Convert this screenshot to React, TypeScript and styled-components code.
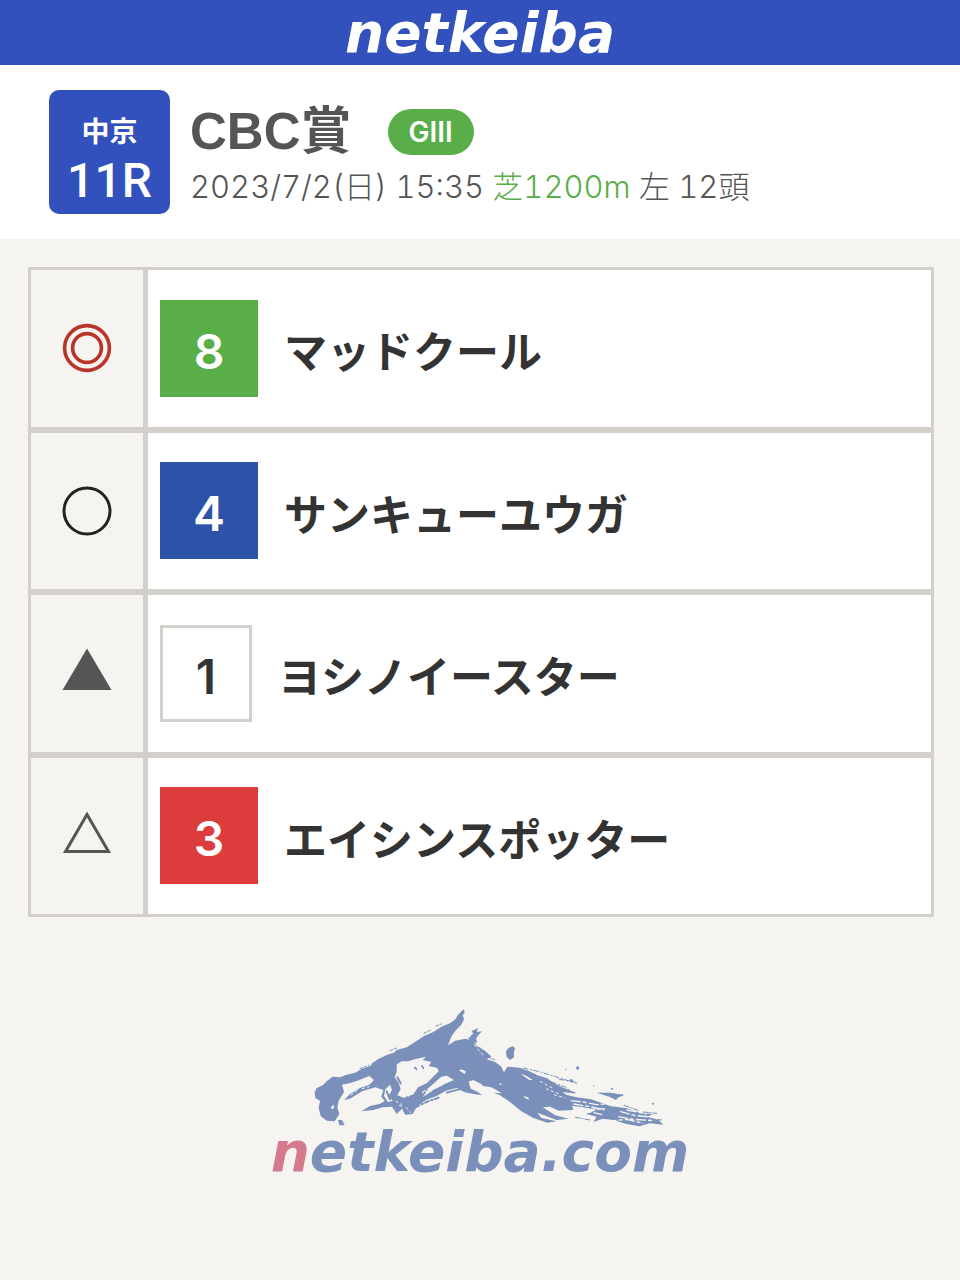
import React from "react";
import styled, { createGlobalStyle } from "styled-components";

const brand = "#3251bd";
const paper = "#f5f4f0";
const line = "#d3d0cb";
const turf = "#59ae4a";
const ink = "#555555";
const brush = "#7a90ba";

const GlobalStyle = createGlobalStyle`
  *, *::before, *::after { box-sizing: border-box; }
  body {
    margin: 0;
    background: ${paper};
    color: ${ink};
    font-family: Inter, "Noto Sans CJK JP", sans-serif;
  }
  h1, p { margin: 0; }
`;

const TopBar = styled.header`
  display: flex;
  align-items: center;
  justify-content: center;
  height: 65px;
  background: ${brand};
`;

const Wordmark = styled.a<{ $color: string }>`
  font: italic 700 55px/64px "DejaVu Sans", sans-serif;
  color: ${(p) => p.$color};
  text-decoration: none;
`;

const Initial = styled.span`
  color: #d47a8c;
`;

const RaceHeader = styled.section`
  display: flex;
  gap: 20px;
  padding: 25px 49px;
  background: #fff;
`;

const RaceNumber = styled.div`
  display: flex;
  flex-direction: column;
  align-items: center;
  flex: none;
  width: 121px;
  height: 124px;
  padding-top: 24px;
  border-radius: 10px;
  background: ${brand};
  color: #fff;
`;

const Venue = styled.span`
  font-size: 28px;
  font-weight: 700;
  line-height: 36px;
`;

const Round = styled.span`
  font: 500 48px/62px Roboto, sans-serif;
`;

const RaceInfo = styled.div`
  padding-top: 12px;
`;

const TitleLine = styled.div`
  display: flex;
  align-items: center;
  gap: 36px;
  height: 60px;
`;

const Title = styled.h1`
  font: 700 51px/60px "Liberation Sans", "Noto Sans CJK JP", sans-serif;
`;

const Grade = styled.span`
  padding: 0 21px;
  border-radius: 23px;
  background: ${turf};
  color: #fff;
  font-size: 28px;
  font-weight: 600;
  line-height: 46px;
`;

const Details = styled.p`
  font-size: 31px;
  font-weight: 300;
  font-variant-numeric: tabular-nums;
  line-height: 50px;
`;

const Course = styled.span`
  color: ${turf};
`;

const Main = styled.main`
  padding: 28px 26px 0 28px;
`;

const Picks = styled.table`
  width: 100%;
  height: 650px;
  border-collapse: separate;
  border-spacing: 0;
`;

const MarkCell = styled.td`
  width: 118px;
  padding: 0;
  border: 3px solid ${line};
  text-align: center;
`;

const HorseCell = styled.td`
  padding: 0 12px;
  border: 3px solid ${line};
  border-left-width: 2px;
  background: #fff;
`;

const Horse = styled.div`
  display: flex;
  align-items: center;
  gap: 26px;
`;

const Post = styled.span<{ $bg: string; $plain?: boolean }>`
  flex: none;
  width: ${(p) => (p.$plain ? 92 : 98)}px;
  height: 97px;
  border: 3px solid ${(p) => (p.$plain ? line : p.$bg)};
  background: ${(p) => p.$bg};
  color: ${(p) => (p.$plain ? "#333" : "#fff")};
  font-size: 48px;
  font-weight: 600;
  line-height: 98px;
  text-align: center;
`;

const Name = styled.span`
  padding-top: 2px;
  color: #333;
  font: 700 43px/60px "Noto Sans CJK JP", sans-serif;
`;

const MarkIcon = styled.svg`
  display: block;
  margin: 0 auto;
`;

const Footer = styled.footer`
  display: flex;
  flex-direction: column;
  align-items: center;
  padding: 83px 0 72px;
`;

const BrushHorse = styled.svg`
  display: block;
  width: 380px;
  height: 120px;
`;

type MarkKind = "double" | "circle" | "solid" | "open";

const markLabels: Record<MarkKind, string> = {
  double: "本命",
  circle: "対抗",
  solid: "単穴",
  open: "連下",
};

function Mark({ kind }: { kind: MarkKind }) {
  return (
    <MarkIcon width="50" height="50" viewBox="0 0 50 50" role="img" aria-label={markLabels[kind]} fill="none">
      {kind === "double" && (
        <g stroke="#b9342b" strokeWidth="3.6">
          <circle cx="25" cy="25" r="22.400" />
          <circle cx="25" cy="25" r="14.400" />
        </g>
      )}
      {kind === "circle" && <circle cx="25" cy="25" r="23" stroke="#222" strokeWidth="3" />}
      {kind === "solid" && <path d="M25 0.500L49.500 42H.5Z" fill={ink} />}
      {kind === "open" && <path d="M25 3.500L46.500 40.500H3.500Z" stroke={ink} strokeWidth="3" />}
    </MarkIcon>
  );
}

const picks: { kind: MarkKind; post: number; bg: string; name: string }[] = [
  { kind: "double", post: 8, bg: turf, name: "マッドクール" },
  { kind: "circle", post: 4, bg: "#2d52a9", name: "サンキューユウガ" },
  { kind: "solid", post: 1, bg: "#ffffff", name: "ヨシノイースター" },
  { kind: "open", post: 3, bg: "#dc3c3c", name: "エイシンスポッター" },
];

function HorseDrawing() {
  return (
    <BrushHorse viewBox="-30 0 1140 360" overflow="visible" aria-hidden="true">
      <g fill={brush}>
        {/* back, neck and raised tail */}
        <path d="M44 276L50 264L68 256L80 244L98 230L120 232L140 224L166 218L186 206L212 198L216 190L236 176L262 164L282 158L290 150L320 142L345 126L372 108L400 96L424 80L450 70L466 58L474 44L492 28L494 38L488 46L492 58L484 74L466 92L454 110L444 136L466 122L496 116L522 124L530 138L552 152L574 170L560 178L586 186L604 200L612 217L622 200L660 203L682 212L700 230L728 240L752 258L778 270L800 285L822 294L812 304L820 330L776 332L750 320L728 322L766 346L806 356L770 360L712 338L724 354L770 364L742 368L700 354L664 334L630 306L600 286L560 270L544 252L520 240L506 246L512 266L534 276L546 286L520 282L492 276L470 264L438 272L410 288L378 300L352 318L338 342L316 344L306 326L290 342L276 320L248 322L220 330L184 334L210 318L238 312L254 304L244 290L250 270L226 262L186 274L150 296L132 300L150 282L180 264L208 254L222 240L208 228L172 242L148 250L126 254L132 276L116 302L112 322L118 342L104 364L80 362L62 348L56 324L60 302L46 294Z" />
        <path d="M114 360L126 360L134 376L118 376Z" />
        <path d="M504 116L520 100L514 94L534 84L530 96L546 94L536 104L528 116L532 128L518 126Z" />
        <path d="M618 155Q620 144 638 139L645 144Q640 160 642 172L630 180L620 171Z" />
        {/* dry trailing strokes */}
        <path d="M770 278L830 292L874 298L930 318L980 325L1026 340L1060 342L1040 350L1076 360L1090 374L1050 370L1018 379L980 372L940 360L908 356L880 366L890 350L858 342L890 330L850 322L800 316L762 308Z" />
        <path d="M890 278L930 278L972 286L956 292L948 300L928 290Z" />
        <path d="M676 208L712 226L740 234L762 250L792 264L830 280L784 276L744 258L708 240Z" />
        <circle cx="833" cy="204" r="5" />
        <circle cx="814" cy="242" r="5" />
        <circle cx="797" cy="208" r="2" />
        <circle cx="936" cy="266" r="3" />
        <circle cx="1059" cy="311" r="3" />
        <circle cx="881" cy="257" r="2" />
      </g>
      {/* gaps between the legs */}
      <g fill={paper}>
        <path d="M290 194L304 184L324 184L350 176L378 170L368 180L394 186L386 198L412 204L416 214L396 234L380 250L354 262L338 288L312 294L292 286L302 268L296 248L284 232L290 216Z" />
        <path d="M424 230L440 227L462 240L434 252L416 264L392 276L370 290L366 276L388 262L406 246Z" />
        <path d="M477 211Q484 204 498 215L494 222Z" />
        <path d="M256 268L270 254L276 270L266 288L278 302L264 306L252 288Z" />
        <path d="M92 322L102 314L102 324L96 328Z" />
        <path d="M508 242L524 244L548 258L574 262L606 280L574 278L536 272L514 260Z" />
        <path d="M670 288L684 292L688 299L676 295Z" />
        <path d="M662 222L676 226L698 240L688 240Z" />
        <path d="M598 249L606 253L600 256Z" />
      </g>
      <g stroke={brush} fill="none" strokeLinecap="round">
        <path d="M286 250L296 264M292 232L302 250M260 274L270 298M270 286L296 316" strokeWidth="6" />
        <path d="M300 300L340 286L360 264L384 258M310 310L346 294L370 284L380 268M316 322L350 320L384 304L420 292" strokeWidth="6" strokeDasharray="12 8 4 7" />
        <path d="M364 160L394 150M344 202L350 208M366 198L370 204M400 272L438 254M440 278L486 266" strokeWidth="5" />
        <path d="M270 152L290 144M372 100L392 90M408 78L424 72M526 140L558 156M554 166L584 180M484 36L494 30M180 206L208 196M538 142L570 166" strokeWidth="3" strokeDasharray="8 5" />
        <path d="M670 204L722 216L766 230L830 250M696 220L744 242L798 262L820 280M778 238L826 246M750 258L788 274L830 278M902 280L968 284" strokeWidth="3" strokeDasharray="14 8 4 6" />
        <path d="M972 316L1018 332M1000 360L1080 368M1030 336L1070 340M1044 356L1084 360M826 352L870 360" strokeWidth="3" strokeDasharray="15 5 3 6" />
      </g>
      <g stroke={paper} fill="none">
        <path d="M812 302L850 306L890 314L922 312M820 312L870 320L914 330M836 324L880 328L914 326M826 340L872 336L906 344M960 334L1002 346L1060 352M954 350L1000 358L1064 362M980 330L1040 342M920 364L980 358L1030 370" strokeWidth="4" strokeDasharray="30 6 12 7" />
        <path d="M318 322L332 338M302 310L308 326M288 302L302 320M152 286L172 270M186 266L208 260M720 244L760 266M738 266L782 284M522 134L550 166M762 284L796 294" strokeWidth="3" strokeDasharray="9 7" />
      </g>
    </BrushHorse>
  );
}

export default function App() {
  return (
    <>
      <GlobalStyle />
      <TopBar>
        <Wordmark href="#" $color="#ffffff">netkeiba</Wordmark>
      </TopBar>
      <RaceHeader>
        <RaceNumber>
          <Venue>中京</Venue>
          <Round>11R</Round>
        </RaceNumber>
        <RaceInfo>
          <TitleLine>
            <Title>CBC賞</Title>
            <Grade>GIII</Grade>
          </TitleLine>
          <Details>
            2023/7/2(日) 15:35 <Course>芝1200m</Course> 左 12頭
          </Details>
        </RaceInfo>
      </RaceHeader>
      <Main>
        <Picks>
          <tbody>
            {picks.map((p) => (
              <tr key={p.post}>
                <MarkCell>
                  <Mark kind={p.kind} />
                </MarkCell>
                <HorseCell>
                  <Horse>
                    <Post $bg={p.bg} $plain={p.post === 1}>{p.post}</Post>
                    <Name>{p.name}</Name>
                  </Horse>
                </HorseCell>
              </tr>
            ))}
          </tbody>
        </Picks>
      </Main>
      <Footer>
        <HorseDrawing />
        <Wordmark href="#" $color={brush}>
          <Initial>n</Initial>etkeiba.com
        </Wordmark>
      </Footer>
    </>
  );
}
